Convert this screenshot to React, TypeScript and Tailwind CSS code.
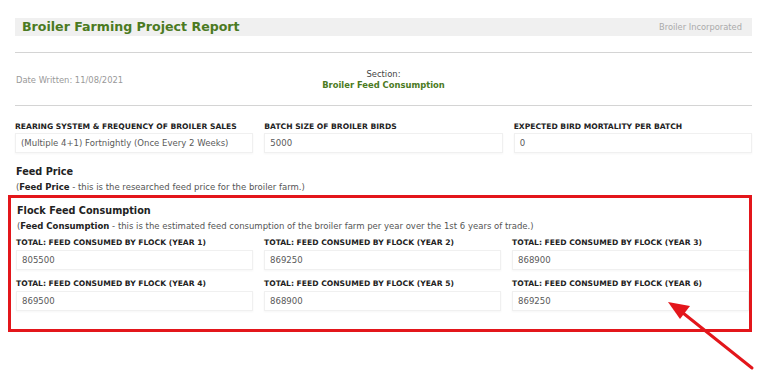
import React from "react";

const font = { fontFamily: '"DejaVu Sans", Verdana, sans-serif' };

function Field({ label, value, gap }: { label: string; value: string; gap: string }) {
  return (
    <div className="flex flex-col">
      <div className="text-[7.6px] font-bold leading-[10px] text-[#222] uppercase whitespace-nowrap">{label}</div>
      <div className={`${gap} h-[20px] border border-[#f0f0f0] shadow-[0_1px_2px_rgba(0,0,0,0.04)] pl-[5px] flex items-center text-[8.55px] text-[#5a5a5a] whitespace-nowrap`}>
        {value}
      </div>
    </div>
  );
}

export default function App() {
  return (
    <div className="relative w-[768px] h-[378px] bg-white overflow-hidden" style={font}>
      <div className="pl-[15px] pr-[16px] pt-[18px]">
        <div className="h-[18px] bg-[#f0f0f0] flex items-center justify-between pl-[7px] pr-[10px]">
          <div className="text-[12.6px] font-bold text-[#4b7a22] leading-none">Broiler Farming Project Report</div>
          <div className="text-[8.3px] text-[#aaa]">Broiler Incorporated</div>
        </div>
        <div className="mt-[16px] h-[1px] bg-[#d4d4d4]" />
        <div className="h-[52px] relative">
          <div className="absolute left-[1px] top-[22px] text-[8.4px] leading-[11px] text-[#999]">Date Written: 11/08/2021</div>
          <div className="absolute left-0 right-0 top-[16px] flex flex-col items-center text-[8.4px] leading-[11px]">
            <div className="text-[#444]">Section:</div>
            <div className="font-bold text-[#4b7a22]">Broiler Feed Consumption</div>
          </div>
        </div>
        <div className="h-[1px] bg-[#d4d4d4]" />
        <div className="mt-[16px] grid grid-cols-3 gap-x-[11px]">
          <Field gap="mt-[1px]" label="Rearing System & Frequency of Broiler Sales" value="(Multiple 4+1) Fortnightly (Once Every 2 Weeks)" />
          <Field gap="mt-[1px]" label="Batch Size of Broiler Birds" value="5000" />
          <Field gap="mt-[1px]" label="Expected Bird Mortality per Batch" value="0" />
        </div>
        <div className="mt-[13px] text-[9.7px] font-bold text-[#222] leading-[12px] pl-[1px]">Feed Price</div>
        <div className="mt-[4px] text-[8.5px] text-[#555] leading-[10px] pl-[1px]">
          (<span className="font-bold text-[#222]">Feed Price</span> - this is the researched feed price for the broiler farm.)
        </div>
        <div className="mt-[3px] -ml-[7px] border-[3px] border-[#e3161b] pl-[5px] pr-0 pt-[7px] pb-[18px]">
          <div className="text-[9.7px] font-bold text-[#222] leading-[12px] pl-[1px]">Flock Feed Consumption</div>
          <div className="mt-[4px] text-[8.5px] text-[#555] leading-[10px] pl-[1px]">
            (<span className="font-bold text-[#222]">Feed Consumption</span> - this is the estimated feed consumption of the broiler farm per year over the 1st 6 years of trade.)
          </div>
          <div className="mt-[7px] grid grid-cols-3 gap-x-[11px] gap-y-[9px]">
            <Field gap="mt-[2px]" label="Total: Feed Consumed by Flock (Year 1)" value="805500" />
            <Field gap="mt-[2px]" label="Total: Feed Consumed by Flock (Year 2)" value="869250" />
            <Field gap="mt-[2px]" label="Total: Feed Consumed by Flock (Year 3)" value="868900" />
            <Field gap="mt-[2px]" label="Total: Feed Consumed by Flock (Year 4)" value="869500" />
            <Field gap="mt-[2px]" label="Total: Feed Consumed by Flock (Year 5)" value="868900" />
            <Field gap="mt-[2px]" label="Total: Feed Consumed by Flock (Year 6)" value="869250" />
          </div>
        </div>
      </div>
      <svg className="absolute left-0 top-0 pointer-events-none" width="768" height="378" viewBox="0 0 768 378">
        <line x1="752" y1="368" x2="683" y2="313" stroke="#e3161b" strokeWidth="3" strokeLinecap="round" />
        <polygon points="668,302 690,306 680,319" fill="#e3161b" />
      </svg>
    </div>
  );
}
